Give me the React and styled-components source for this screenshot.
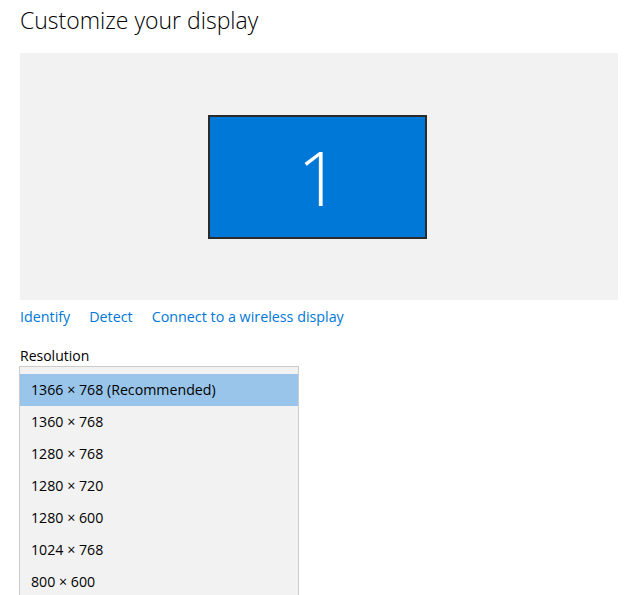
import React from "react";
import styled, { createGlobalStyle } from "styled-components";

const Global = createGlobalStyle`
  html, body { margin: 0; padding: 0; background: #fff; }
  body { font-family: "Open Sans", "Noto Sans", sans-serif; color: #000; overflow: hidden; }
`;

const Page = styled.div`
  width: 631px;
  height: 595px;
  padding-left: 20px;
  box-sizing: border-box;
  overflow: hidden;
`;

const Title = styled.h1`
  margin: 0;
  height: 53px;
  padding-top: 4px;
  box-sizing: border-box;
  font-family: "Open Sans", sans-serif;
  font-weight: 300;
  font-size: 23px;
  line-height: 32px;
  color: #000;
`;

const Preview = styled.div`
  width: 598px;
  height: 247px;
  background: #f2f2f2;
  display: flex;
  align-items: center;
  justify-content: center;
`;

const Monitor = styled.div`
  width: 219px;
  height: 124px;
  box-sizing: border-box;
  border: 2px solid #2b2b2b;
  background: #0078d7;
  color: #fff;
  display: flex;
  align-items: center;
  justify-content: center;
  padding-left: 3px;
  font-family: "Open Sans", sans-serif;
  font-weight: 300;
  font-size: 76px;
  line-height: 1;
  margin-left: -3px;
`;

const Links = styled.div`
  display: flex;
  gap: 19px;
  margin-top: 6px;
  height: 20px;
  align-items: center;
`;

const Link = styled.a`
  color: #0078d7;
  font-size: 14.3px;
  text-decoration: none;
  cursor: pointer;
`;

const Label = styled.div`
  margin-top: 20px;
  font-size: 14px;
  line-height: 20px;
  color: #000;
`;

const List = styled.ul`
  list-style: none;
  margin: 0 0 0 -1px;
  padding: 7px 0 0;
  width: 280px;
  box-sizing: border-box;
  border: 1px solid #cccccc;
  border-bottom: none;
  background: #f2f2f2;
  height: 240px;
`;

const Item = styled.li`
  height: 32px;
  display: flex;
  align-items: center;
  padding-left: 11px;
  padding-bottom: 1px;
  box-sizing: border-box;
  font-size: 14.2px;
  color: #000;
  background: ${(p) => (p.$selected ? "#99c5ea" : "transparent")};
`;

const resolutions = [
  "1366 × 768 (Recommended)",
  "1360 × 768",
  "1280 × 768",
  "1280 × 720",
  "1280 × 600",
  "1024 × 768",
  "800 × 600",
];

export default function App() {
  return (
    <>
      <Global />
      <Page>
        <Title>Customize your display</Title>
        <Preview>
          <Monitor>1</Monitor>
        </Preview>
        <Links>
          <Link>Identify</Link>
          <Link>Detect</Link>
          <Link>Connect to a wireless display</Link>
        </Links>
        <Label>Resolution</Label>
        <List>
          {resolutions.map((r, i) => (
            <Item key={r} $selected={i === 0}>
              {r}
            </Item>
          ))}
        </List>
      </Page>
    </>
  );
}
